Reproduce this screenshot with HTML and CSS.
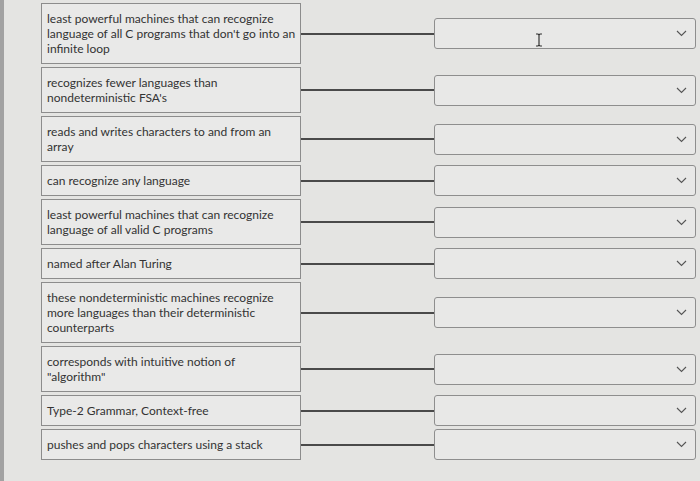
FILE: index.html
```html
<!DOCTYPE html>
<html lang="en">
	<head>
		<meta charset="UTF-8" />
		<meta name="viewport" content="width=device-width, initial-scale=1.0" />
		<title>Matching</title>
		<link rel="stylesheet" href="styles.css">
	</head>
	<body>
		<div class="page">
			<div class="match-list">
				<div class="match-row">
					<div class="prompt">least powerful machines that can recognize<br>language of all C programs that don't go into an<br>infinite loop</div>
					<div class="connector"></div>
					<div class="select">
						<svg class="cursor" width="8" height="14" viewBox="0 0 8 14"><path d="M1 1h2l1 1 1-1h2M4 2v10M1 13h2l1-1 1 1h2" fill="none" stroke="#333" stroke-width="1.2"/></svg>
						<svg class="chevron" width="11" height="7" viewBox="0 0 11 7"><path d="M1 1l4.5 4.5L10 1" fill="none" stroke="#555" stroke-width="1.1"/></svg>
					</div>
				</div>
				<div class="match-row">
					<div class="prompt">recognizes fewer languages than<br>nondeterministic FSA's</div>
					<div class="connector"></div>
					<div class="select"><svg class="chevron" width="11" height="7" viewBox="0 0 11 7"><path d="M1 1l4.5 4.5L10 1" fill="none" stroke="#555" stroke-width="1.1"/></svg></div>
				</div>
				<div class="match-row">
					<div class="prompt">reads and writes characters to and from an<br>array</div>
					<div class="connector"></div>
					<div class="select"><svg class="chevron" width="11" height="7" viewBox="0 0 11 7"><path d="M1 1l4.5 4.5L10 1" fill="none" stroke="#555" stroke-width="1.1"/></svg></div>
				</div>
				<div class="match-row">
					<div class="prompt">can recognize any language</div>
					<div class="connector"></div>
					<div class="select"><svg class="chevron" width="11" height="7" viewBox="0 0 11 7"><path d="M1 1l4.5 4.5L10 1" fill="none" stroke="#555" stroke-width="1.1"/></svg></div>
				</div>
				<div class="match-row">
					<div class="prompt">least powerful machines that can recognize<br>language of all valid C programs</div>
					<div class="connector"></div>
					<div class="select"><svg class="chevron" width="11" height="7" viewBox="0 0 11 7"><path d="M1 1l4.5 4.5L10 1" fill="none" stroke="#555" stroke-width="1.1"/></svg></div>
				</div>
				<div class="match-row">
					<div class="prompt">named after Alan Turing</div>
					<div class="connector"></div>
					<div class="select"><svg class="chevron" width="11" height="7" viewBox="0 0 11 7"><path d="M1 1l4.5 4.5L10 1" fill="none" stroke="#555" stroke-width="1.1"/></svg></div>
				</div>
				<div class="match-row">
					<div class="prompt">these nondeterministic machines recognize<br>more languages than their deterministic<br>counterparts</div>
					<div class="connector"></div>
					<div class="select"><svg class="chevron" width="11" height="7" viewBox="0 0 11 7"><path d="M1 1l4.5 4.5L10 1" fill="none" stroke="#555" stroke-width="1.1"/></svg></div>
				</div>
				<div class="match-row">
					<div class="prompt">corresponds with intuitive notion of<br>"algorithm"</div>
					<div class="connector"></div>
					<div class="select"><svg class="chevron" width="11" height="7" viewBox="0 0 11 7"><path d="M1 1l4.5 4.5L10 1" fill="none" stroke="#555" stroke-width="1.1"/></svg></div>
				</div>
				<div class="match-row">
					<div class="prompt">Type-2 Grammar, Context-free</div>
					<div class="connector"></div>
					<div class="select"><svg class="chevron" width="11" height="7" viewBox="0 0 11 7"><path d="M1 1l4.5 4.5L10 1" fill="none" stroke="#555" stroke-width="1.1"/></svg></div>
				</div>
				<div class="match-row">
					<div class="prompt">pushes and pops characters using a stack</div>
					<div class="connector"></div>
					<div class="select"><svg class="chevron" width="11" height="7" viewBox="0 0 11 7"><path d="M1 1l4.5 4.5L10 1" fill="none" stroke="#555" stroke-width="1.1"/></svg></div>
				</div>
			</div>
		</div>
	</body>
</html>
```

FILE: styles.css
```css
* { margin: 0; padding: 0; box-sizing: border-box; }
body {
	font-family: Lato, 'Open Sans', sans-serif;
	font-size: 12px;
	line-height: 15px;
	color: #333;
	background: #e4e4e2;
	height: 481px;
	overflow: hidden;
}
.page {
	height: 100%;
	border-left: 4px solid #a2a2a2;
	padding: 3px 0 0 37px;
}
.match-list {
	display: flex;
	flex-direction: column;
	gap: 3px;
}
.match-row {
	display: grid;
	grid-template-columns: 260px 133px 262px;
	align-items: center;
}
.prompt {
	background: #e9e9e8;
	border: 1px solid #8c8c8c;
	padding: 7px 2px 7px 5px;
	white-space: nowrap;
}
.connector {
	height: 2px;
	background: #4a4a4a;
}
.select {
	position: relative;
	height: 31px;
	background: #e8e8e7;
	border: 1px solid #8e8e8e;
	border-radius: 3px;
	display: flex;
	align-items: center;
	justify-content: flex-end;
	padding-right: 8px;
}
.cursor {
	position: absolute;
	left: 100px;
	top: 14px;
}
```
